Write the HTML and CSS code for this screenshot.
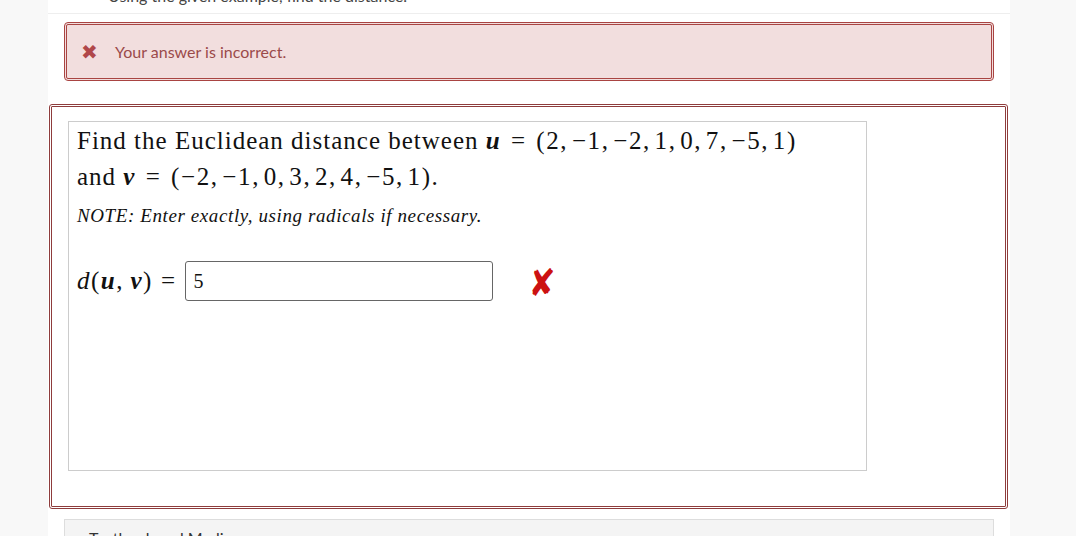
FILE: index.html
```html
<!DOCTYPE html>
<html lang="en">

<head>
  <meta charset="UTF-8" />
  <title>Question</title>
  <link rel="stylesheet" href="styles.css">
</head>

<body>
  <div class="coluna">
    <p class="texto-anterior">Using the given example, find the distance.</p>

    <div class="alerta">
      <span class="alerta-icone">&#10006;</span>
      <span>Your answer is incorrect.</span>
    </div>

    <div class="questao">
      <div class="questao-conteudo">
        <p class="enunciado">
          Find the Euclidean distance between <b class="vetor">u</b> <span class="op">=</span> <span class="tupla">(2,&hairsp;&minus;1,&hairsp;&minus;2,&hairsp;1,&hairsp;0,&hairsp;7,&hairsp;&minus;5,&hairsp;1)</span><br>
          and <b class="vetor">v</b> <span class="op">=</span> <span class="tupla">(&minus;2,&hairsp;&minus;1,&hairsp;0,&hairsp;3,&hairsp;2,&hairsp;4,&hairsp;&minus;5,&hairsp;1)</span>.
        </p>
        <p class="nota">NOTE: Enter exactly, using radicals if necessary.</p>

        <div class="resposta">
          <span class="rotulo"><i>d</i>(<b class="vetor">u</b>,&thinsp;<b class="vetor">v</b>)</span>
          <span class="op">=</span>
          <div class="campo">5</div>
          <span class="errado">&#10008;</span>
        </div>
      </div>
    </div>

    <div class="painel-midia">Textbook and Media</div>
  </div>
</body>

</html>
```

FILE: styles.css
```css
:root {
  --fundo: #f8f8f8;
  --vermelho: #a94442;
  --rosa: #f2dede;
  --borda-questao: #8e3c3c;
}

body {
  margin: 0;
  background-color: var(--fundo);
  font-family: Lato, sans-serif;
  overflow: hidden;
}

.coluna {
  margin-left: 48px;
  width: 962px;
  min-height: 560px;
  background-color: white;
}

.texto-anterior {
  margin: -14px 0 0;
  padding: 0 0 0 60px;
  height: 27px;
  font-size: 16px;
  color: #444;
  border-bottom: 1px solid #eee;
}

.alerta {
  margin: 8px 16px 0;
  height: 53px;
  display: flex;
  align-items: center;
  gap: 17px;
  padding-left: 14px;
  background-color: var(--rosa);
  border: 3px double var(--vermelho);
  border-radius: 4px;
  color: #9b4a4a;
  font-size: 16px;
}

.alerta-icone {
  color: #b0474a;
  font-size: 20px;
}

.questao {
  margin: 23px 2px 0 1px;
  padding: 14px 138px 35px 16px;
  border: 3px double var(--borda-questao);
  border-radius: 3px;
}

.questao-conteudo {
  height: 348px;
  border: 1px solid #ccc;
  padding: 0 8px;
  font-family: "Liberation Serif", serif;
  color: #111;
}

.enunciado {
  margin: 1px 0 0;
  font-size: 25px;
  line-height: 36px;
  letter-spacing: 1px;
}

.tupla {
  letter-spacing: 1.6px;
}

.vetor {
  font-style: italic;
}

.op {
  margin: 0 3px;
}

.nota {
  margin: 10px 0 0;
  font-style: italic;
  font-size: 19px;
  letter-spacing: 0.6px;
}

.resposta {
  display: flex;
  align-items: center;
  margin-top: 30px;
  font-size: 25px;
  letter-spacing: 1.5px;
}

.resposta .op {
  margin: 0 8px 0 8px;
}

.campo {
  width: 298px;
  height: 38px;
  padding-left: 8px;
  border: 1px solid #666;
  border-radius: 3px;
  font-size: 20px;
  line-height: 38px;
  letter-spacing: 0;
}

.errado {
  margin: 4px 0 0 33px;
  color: #cc1111;
  font-family: "DejaVu Sans", sans-serif;
  font-size: 38px;
  transform: scaleX(0.85);
}

.painel-midia {
  margin: 10px 16px 0;
  padding: 8px 24px;
  background-color: #f4f4f4;
  border: 1px solid #ddd;
  color: #333;
  font-size: 16px;
}
```
